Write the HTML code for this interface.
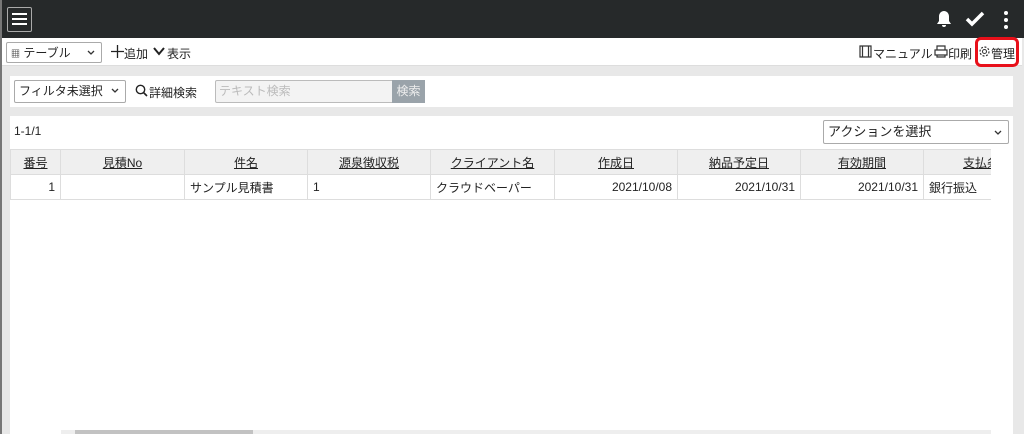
<!DOCTYPE html>
<html><head><meta charset="utf-8"><style>
*{box-sizing:border-box;margin:0;padding:0}
body{width:1024px;height:434px;overflow:hidden;background:#e8e8e8;font-family:"Liberation Sans","Noto Sans CJK JP",sans-serif;font-size:12px;color:#222;position:relative}
.a{position:absolute}
.hdr{left:2px;top:0;width:1022px;height:38px;background:#26292a}
.tb{left:2px;top:38px;width:1020px;height:28px;background:#fff;border-bottom:1px solid #ddd}
.sel{border:1px solid #aaa;border-radius:2px;background:#fff;font-size:12px;padding-left:4px;line-height:20px}
.chev{position:absolute;right:6px;top:7px}
table{border-collapse:collapse;table-layout:fixed}
td,th{border:1px solid #ddd;height:25px;font-size:12px;font-weight:normal;padding:0 5px;white-space:nowrap;overflow:hidden}
th{background:#efefef;text-decoration:underline;text-align:center;font-size:12px}
</style></head><body>
<div class="a" style="left:0;top:0;width:2px;height:434px;background:#777"></div>
<div class="a hdr"></div>
<div class="a" style="left:7px;top:7px;width:25px;height:25px;border:1px solid #aaa;border-radius:2px"></div>
<div class="a" style="left:12px;top:13px;width:15px;height:2px;background:#fff;box-shadow:0 5px 0 #fff,0 10px 0 #fff"></div>
<svg class="a" style="left:934px;top:9px" width="20" height="20" viewBox="0 0 20 20"><path d="M10 2c-3 0-5 2.5-5 5.5V12L3 15h14l-2-3V7.5C15 4.5 13 2 10 2z M8 16a2 2 0 0 0 4 0z" fill="#fff"/></svg>
<svg class="a" style="left:964px;top:9px" width="22" height="20" viewBox="0 0 22 20"><path d="M3 10l5 5L19 4" stroke="#fff" stroke-width="3.5" fill="none"/></svg>
<div class="a" style="left:1004px;top:11px;width:4px;height:4px;border-radius:2px;background:#fff;box-shadow:0 7px 0 #fff,0 14px 0 #fff"></div>
<div class="a tb"></div>
<div class="a sel" style="left:6px;top:42px;width:96px;height:21px"><span style="font-size:9px">▦</span> テーブル<svg class="chev" width="8" height="6" viewBox="0 0 8 6"><path d="M1 1l3 3 3-3" stroke="#333" fill="none" stroke-width="1.3"/></svg></div>
<svg class="a" style="left:111px;top:45px" width="13" height="13" viewBox="0 0 13 13"><path d="M6.5 0v13M0 6.5h13" stroke="#222" stroke-width="1.3"/></svg>
<div class="a" style="left:124px;top:45px">追加</div>
<svg class="a" style="left:153px;top:47px" width="12" height="9" viewBox="0 0 12 9"><path d="M1 1l5 6 5-6" stroke="#222" fill="none" stroke-width="2"/></svg>
<div class="a" style="left:167px;top:45px">表示</div>
<svg class="a" style="left:859px;top:45px" width="13" height="13" viewBox="0 0 13 13"><path d="M1 1h11v11H1zM3.5 1v11M9.5 1v11" stroke="#333" fill="none" stroke-width="1.2"/></svg>
<div class="a" style="left:873px;top:45px">マニュアル</div>
<svg class="a" style="left:934px;top:45px" width="14" height="13" viewBox="0 0 14 13"><path d="M3 5V1h8v4M1 5h12v5H1zM3 10v2h8v-2" stroke="#333" fill="none" stroke-width="1.2"/></svg>
<div class="a" style="left:948px;top:45px">印刷</div>
<svg class="a" style="left:978px;top:45px" width="13" height="13" viewBox="0 0 13 13"><circle cx="6.5" cy="6.5" r="4.5" stroke="#333" fill="none" stroke-width="1.2" stroke-dasharray="2 1.5"/><circle cx="6.5" cy="6.5" r="2" stroke="#333" fill="none"/></svg>
<div class="a" style="left:991px;top:45px">管理</div>
<div class="a" style="left:975px;top:37px;width:44px;height:30px;border:3px solid #e8101a;border-radius:6px"></div>
<div class="a" style="left:10px;top:76px;width:1003px;height:31px;background:#fff"></div>
<div class="a sel" style="left:14px;top:80px;width:112px;height:23px;line-height:21px;font-size:12px">フィルタ未選択<svg class="chev" width="8" height="6" viewBox="0 0 8 6"><path d="M1 1l3 3 3-3" stroke="#333" fill="none" stroke-width="1.3"/></svg></div>
<svg class="a" style="left:135px;top:84px" width="13" height="13" viewBox="0 0 13 13"><circle cx="5.5" cy="5.5" r="4.2" stroke="#222" fill="none" stroke-width="1.4"/><path d="M8.5 8.5L12 12" stroke="#222" stroke-width="1.6"/></svg>
<div class="a" style="left:149px;top:84px">詳細検索</div>
<div class="a" style="left:215px;top:80px;width:178px;height:23px;border:1px solid #bbb;border-radius:2px 0 0 2px;background:#f3f3f3;color:#bbb;padding-left:3px;line-height:21px">テキスト検索</div>
<div class="a" style="left:392px;top:80px;width:33px;height:23px;background:#9aa3aa;color:#eee;text-align:center;line-height:23px">検索</div>
<div class="a" style="left:10px;top:116px;width:1003px;height:318px;background:#fff"></div>
<div class="a" style="left:14px;top:124px;font-size:12px">1-1/1</div>
<div class="a sel" style="left:823px;top:120px;width:186px;height:24px;line-height:22px;font-size:13px">アクションを選択<svg class="chev" style="top:9px" width="8" height="6" viewBox="0 0 8 6"><path d="M1 1l3 3 3-3" stroke="#333" fill="none" stroke-width="1.3"/></svg></div>
<div class="a" style="left:10px;top:149px;width:981px;overflow:hidden">
<table style="width:1040px">
<colgroup><col style="width:50px"><col style="width:124px"><col style="width:123px"><col style="width:123px"><col style="width:124px"><col style="width:123px"><col style="width:123px"><col style="width:123px"><col style="width:127px"></colgroup>
<tr><th>番号</th><th>見積No</th><th>件名</th><th>源泉徴収税</th><th>クライアント名</th><th>作成日</th><th>納品予定日</th><th>有効期間</th><th>支払条件</th></tr>
<tr><td style="text-align:right">1</td><td></td><td>サンプル見積書</td><td>1</td><td>クラウドベーパー</td><td style="text-align:right">2021/10/08</td><td style="text-align:right">2021/10/31</td><td style="text-align:right">2021/10/31</td><td>銀行振込</td></tr>
</table></div>
<div class="a" style="left:61px;top:430px;width:930px;height:4px;background:#eee"></div>
<div class="a" style="left:75px;top:430px;width:178px;height:4px;background:#c2c2c2"></div>
</body></html>
